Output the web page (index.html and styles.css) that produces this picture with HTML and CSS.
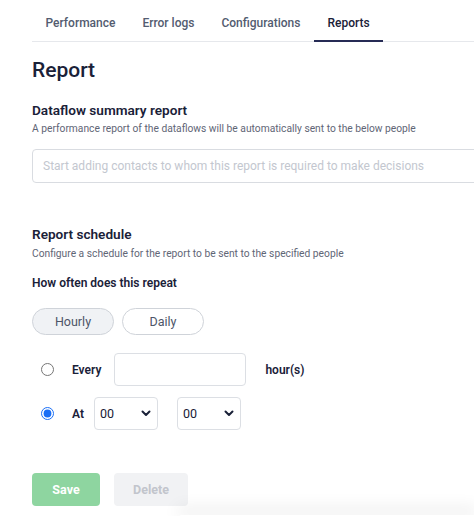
FILE: index.html
```html
<!DOCTYPE html>
<html lang="en">
<head>
  <meta charset="UTF-8">
  <meta name="viewport" content="width=device-width, initial-scale=1.0">
  <title>Reports</title>
  <link rel="stylesheet" href="styles.css">
</head>
<body>
  <nav class="tabs">
    <div class="tab">Performance</div>
    <div class="tab">Error logs</div>
    <div class="tab">Configurations</div>
    <div class="tab active">Reports</div>
  </nav>

  <main class="content">
    <h1 class="page-title">Report</h1>

    <section class="section">
      <h3 class="section-title">Dataflow summary report</h3>
      <p class="section-desc">A performance report of the dataflows will be automatically sent to the below people</p>
      <input class="contacts" type="text" placeholder="Start adding contacts to whom this report is required to make decisions">
    </section>

    <section class="section schedule">
      <h3 class="section-title">Report schedule</h3>
      <p class="section-desc">Configure a schedule for the report to be sent to the specified people</p>
      <div class="repeat-label">How often does this repeat</div>

      <div class="pills">
        <button class="pill selected">Hourly</button>
        <button class="pill">Daily</button>
      </div>

      <div class="option-row">
        <input type="radio" name="when" id="every">
        <label for="every" class="opt-label">Every</label>
        <input type="text" class="hours-input">
        <span class="unit">hour(s)</span>
      </div>

      <div class="option-row">
        <input type="radio" name="when" id="at" checked>
        <label for="at" class="opt-label at">At</label>
        <div class="select-wrap">
          <select class="time-select"><option>00</option><option>01</option><option>02</option></select>
          <svg class="chevron" width="10" height="7" viewBox="0 0 10 7"><path d="M1.5 1.5 L5 5 L8.5 1.5" fill="none" stroke="#1a2138" stroke-width="2" stroke-linecap="round" stroke-linejoin="round"/></svg>
        </div>
        <div class="select-wrap second">
          <select class="time-select"><option>00</option><option>15</option><option>30</option></select>
          <svg class="chevron" width="10" height="7" viewBox="0 0 10 7"><path d="M1.5 1.5 L5 5 L8.5 1.5" fill="none" stroke="#1a2138" stroke-width="2" stroke-linecap="round" stroke-linejoin="round"/></svg>
        </div>
      </div>
    </section>

    <div class="actions">
      <button class="btn save">Save</button>
      <button class="btn delete" disabled>Delete</button>
    </div>
  </main>

  <div class="edge-shadow"></div>
</body>
</html>
```

FILE: styles.css
```css
/* Reset */
* {
  margin: 0;
  padding: 0;
  box-sizing: border-box;
  font-family: 'Roboto', 'Liberation Sans', sans-serif;
}
body {
  background: #fff;
  color: #1a2138;
  overflow: hidden;
  height: 100vh;
  position: relative;
}

/* Tabs */
.tabs {
  display: flex;
  margin-left: 32px;
  border-bottom: 1px solid #e6e8ec;
}
.tab {
  padding: 16px 13.5px 9px;
  font-size: 12px;
  line-height: 15px;
  font-weight: 500;
  color: #535c70;
  border-bottom: 2px solid transparent;
  margin-bottom: -1px;
  cursor: pointer;
}
.tab.active {
  color: #1a2138;
  border-bottom-color: #262b55;
}

/* Content */
.content {
  padding-left: 32px;
}
.page-title {
  margin-top: 14px;
  font-size: 21px;
  line-height: 28px;
  font-weight: 500;
}
.section {
  margin-top: 17px;
}
.section-title {
  font-size: 13.6px;
  line-height: 18px;
  font-weight: 600;
}
.section-desc {
  margin-top: 3px;
  font-size: 10.25px;
  line-height: 14px;
  color: #5f6676;
}
.contacts {
  margin-top: 13px;
  width: 460px;
  height: 34px;
  padding: 0 10px;
  border: 1px solid #d9dce1;
  border-radius: 4px;
  font-size: 12px;
  color: #1a2138;
  outline: none;
}
.contacts::placeholder {
  color: #c3c7cf;
}

/* Schedule */
.schedule {
  margin-top: 42px;
}
.schedule .section-desc {
  margin-top: 4px;
}
.repeat-label {
  margin-top: 14px;
  font-size: 12px;
  line-height: 16px;
  font-weight: 600;
}
.pills {
  display: flex;
  gap: 8px;
  margin-top: 17px;
}
.pill {
  width: 82px;
  height: 27px;
  border: 1px solid #cfd3d9;
  border-radius: 14px;
  background: #fff;
  font-size: 12.5px;
  color: #4d5568;
  cursor: pointer;
}
.pill.selected {
  background: #f0f2f5;
}

.option-row {
  display: flex;
  align-items: center;
  margin-top: 18px;
  height: 33px;
}
.option-row + .option-row {
  margin-top: 11px;
}
.option-row input[type="radio"] {
  width: 13px;
  height: 13px;
  margin: 0 0 0 9px;
  accent-color: #1a6ef5;
}
.opt-label {
  margin-left: 18px;
  font-size: 12px;
  font-weight: 600;
}
.hours-input {
  margin-left: 13px;
  width: 132px;
  height: 33px;
  border: 1px solid #dcdfe4;
  border-radius: 4px;
  outline: none;
}
.unit {
  margin-left: 19px;
  font-size: 12px;
  font-weight: 600;
}
.select-wrap {
  position: relative;
  margin-left: 10px;
}
.select-wrap.second {
  margin-left: 19px;
}
.time-select {
  appearance: none;
  width: 64px;
  height: 33px;
  padding-left: 5px;
  border: 1px solid #dcdfe4;
  border-radius: 4px;
  background: #fff;
  font-size: 12.5px;
  color: #1a2138;
  outline: none;
}
.chevron {
  position: absolute;
  right: 7px;
  top: 13px;
  pointer-events: none;
}

/* Actions */
.actions {
  display: flex;
  gap: 14px;
  margin-top: 43px;
}
.btn {
  height: 33px;
  border: none;
  border-radius: 4px;
  font-size: 12.5px;
  font-weight: 700;
}
.btn.save {
  width: 68px;
  background: #8ed5a0;
  color: #fff;
  cursor: pointer;
}
.btn.delete {
  width: 74px;
  background: #f1f2f4;
  color: #c2c5cc;
}

/* Soft shadow from the panel below */
.edge-shadow {
  position: absolute;
  left: 180px;
  right: 0;
  bottom: 0;
  height: 1px;
  border-radius: 20px 0 0 0;
  box-shadow: 0 -4px 16px 3px rgba(0, 0, 0, 0.1);
}
```
